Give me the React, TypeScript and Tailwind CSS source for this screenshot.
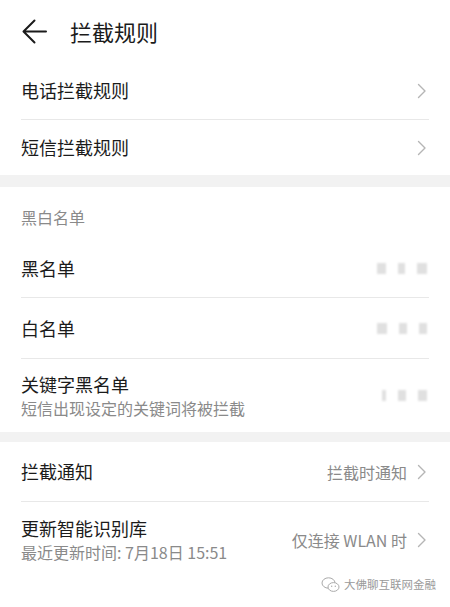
import React from "react";

const Chevron = () => (
  <svg width="10" height="16" viewBox="0 0 10 16" className="shrink-0">
    <path d="M1.5 1.5 L8 8 L1.5 14.5" fill="none" stroke="#b5b5b5" strokeWidth="1.4" strokeLinecap="round" strokeLinejoin="round" />
  </svg>
);

const Blur = ({ dots }: { dots: number[] }) => (
  <div className="flex items-center gap-[12px] blur-[1px]">
    {dots.map((w, i) => (
      <div key={i} className="h-[11px] bg-[#e0e0e0]" style={{ width: w }} />
    ))}
  </div>
);

const Divider = () => <div className="mx-[21px] h-px bg-[#e8e8e8]" />;
const Band = ({ h }: { h: string }) => <div className={`${h} bg-[#f2f2f2]`} />;

export default function App() {
  return (
    <div
      className="w-[450px] h-[607px] bg-white text-[#1b1b1b] overflow-hidden"
      style={{ fontFamily: '"Noto Sans CJK SC", "Noto Sans", sans-serif' }}
    >
      {/* header */}
      <div className="h-[62px] flex items-center pl-[22px]">
        <svg width="25" height="25" viewBox="0 0 25 25">
          <path d="M24 12.5 H2 M12.5 1.5 L1.5 12.5 L12.5 23.5" fill="none" stroke="#1b1b1b" strokeWidth="2" strokeLinecap="round" strokeLinejoin="round" />
        </svg>
        <span className="ml-[23px] text-[22px] leading-none">拦截规则</span>
      </div>

      <div className="h-[57px] flex items-center justify-between px-[21px] pr-[23px] text-[18px]">
        <span>电话拦截规则</span>
        <Chevron />
      </div>
      <Divider />
      <div className="h-[55px] flex items-center justify-between px-[21px] pr-[23px] text-[18px]">
        <span>短信拦截规则</span>
        <Chevron />
      </div>
      <Band h="h-[12px]" />

      <div className="h-[53px] pl-[21px] pt-[19px] text-[16px] leading-[22px] text-[#8a8a8a]">黑白名单</div>

      <div className="h-[57px] flex items-center justify-between px-[21px] pr-[23px] text-[18px]">
        <span>黑名单</span>
        <Blur dots={[9, 7, 10]} />
      </div>
      <Divider />
      <div className="h-[60px] flex items-center justify-between px-[21px] pr-[23px] text-[18px]">
        <span>白名单</span>
        <Blur dots={[10, 8, 8]} />
      </div>
      <Divider />
      <div className="h-[73px] flex items-center justify-between px-[21px] pr-[23px]">
        <div className="flex flex-col">
          <span className="text-[18px] leading-[25px]">关键字黑名单</span>
          <span className="text-[16px] leading-[23px] text-[#8a8a8a]">短信出现设定的关键词将被拦截</span>
        </div>
        <Blur dots={[4, 8, 9]} />
      </div>
      <Band h="h-[10px]" />

      <div className="h-[59px] flex items-center justify-between px-[21px] pr-[23px] text-[18px]">
        <span>拦截通知</span>
        <div className="flex items-center gap-[10px]">
          <span className="text-[16px] text-[#8a8a8a]">拦截时通知</span>
          <Chevron />
        </div>
      </div>
      <Divider />
      <div className="h-[76px] flex items-center justify-between px-[21px] pr-[23px]">
        <div className="flex flex-col -mt-[1px]">
          <span className="text-[18px] leading-[25px]">更新智能识别库</span>
          <span className="text-[16px] leading-[22px] text-[#8a8a8a]">最近更新时间: 7月18日 15:51</span>
        </div>
        <div className="flex items-center gap-[10px]">
          <span className="text-[16px] text-[#8a8a8a]">仅连接 WLAN 时</span>
          <Chevron />
        </div>
      </div>

      <div className="flex items-center justify-end pr-[14px] text-[11.5px] text-[#9a9a9a] -mt-[2px]">
        <svg width="20" height="18" viewBox="0 0 20 18" className="mr-[3px]">
          <ellipse cx="7.5" cy="7" rx="6.5" ry="5.2" fill="none" stroke="#aaa" strokeWidth="1" />
          <ellipse cx="12.5" cy="11" rx="5.5" ry="4.4" fill="white" stroke="#aaa" strokeWidth="1" />
          <circle cx="10.7" cy="10.2" r="0.7" fill="#aaa" />
          <circle cx="14.3" cy="10.2" r="0.7" fill="#aaa" />
        </svg>
        <span>大佛聊互联网金融</span>
      </div>
    </div>
  );
}
